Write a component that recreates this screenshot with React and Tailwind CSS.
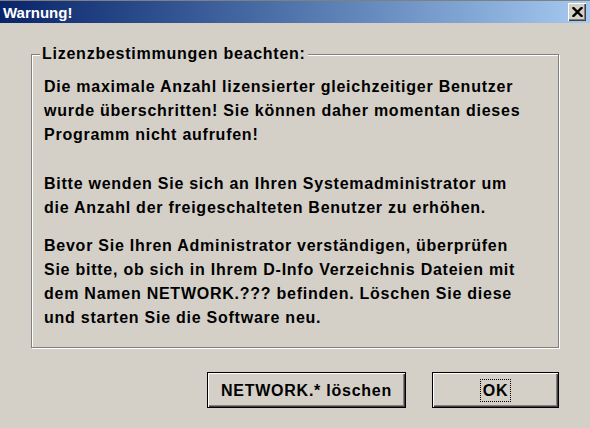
import React from "react";

const font = { fontFamily: '"Liberation Sans", Arial, sans-serif' };

function CloseGlyph() {
  return (
    <svg width="11" height="10" viewBox="0 0 11 10">
      <path d="M1.5 1 L9.5 9 M9.5 1 L1.5 9" stroke="#000" strokeWidth="2.4" strokeLinecap="square" />
    </svg>
  );
}

function Button({ children, width, focus }) {
  return (
    <button
      className={
        "h-[36px] border border-black bg-[#d4d0c8] flex items-center justify-center text-[16px] tracking-[0.75px] font-bold text-black shadow-[inset_1px_1px_0_#ffffff,inset_-1px_-1px_0_#404040,inset_-2px_-2px_0_#808080] " +
        width
      }
      style={font}
    >
      {focus ? (
        <span className="border border-dotted border-black px-[2px] leading-[21px]">{children}</span>
      ) : (
        <span className="leading-[21px]">{children}</span>
      )}
    </button>
  );
}

export default function App() {
  return (
    <div className="w-[590px] h-[428px] bg-[#d4d0c8] flex flex-col overflow-hidden" style={font}>
      {/* caption bar */}
      <div className="h-[23px] border-t border-[#808080] bg-gradient-to-r from-[#0a246a] to-[#a6caf0] flex items-center justify-between pl-[3px] pr-[4px]">
        <span className="text-white font-bold text-[15px] leading-none">Warnung!</span>
        <div className="w-[18px] h-[18px] bg-[#d4d0c8] flex items-center justify-center shadow-[inset_1px_1px_0_#ffffff,inset_-1px_-1px_0_#404040,inset_-2px_-2px_0_#808080]">
          <CloseGlyph />
        </div>
      </div>

      {/* license notice group */}
      <fieldset className="mt-[19px] ml-[31px] w-[528px] border border-[#808080] shadow-[inset_1px_1px_0_#ffffff,1px_1px_0_#ffffff] px-[12px] pb-[17px] text-[16px] tracking-[0.75px] font-bold text-black leading-[24px]">
        <legend className="-ml-[4px] px-[2px] bg-[#d4d0c8] leading-[24px]">Lizenzbestimmungen beachten:</legend>
        <p className="pt-[9px]">
          Die maximale Anzahl lizensierter gleichzeitiger Benutzer
          <br />
          wurde überschritten! Sie können daher momentan dieses
          <br />
          Programm nicht aufrufen!
        </p>
        <p className="mt-[25px]">
          Bitte wenden Sie sich an Ihren Systemadministrator um
          <br />
          die Anzahl der freigeschalteten Benutzer zu erhöhen.
        </p>
        <p className="mt-[14px]">
          Bevor Sie Ihren Administrator verständigen, überprüfen
          <br />
          Sie bitte, ob sich in Ihrem D-Info Verzeichnis Dateien mit
          <br />
          dem Namen NETWORK.??? befinden. Löschen Sie diese
          <br />
          und starten Sie die Software neu.
        </p>
      </fieldset>

      {/* actions */}
      <div className="mt-[24px] flex gap-[26px] pl-[207px]">
        <Button width="w-[199px]">NETWORK.* löschen</Button>
        <Button width="w-[127px]" focus>
          OK
        </Button>
      </div>
    </div>
  );
}
